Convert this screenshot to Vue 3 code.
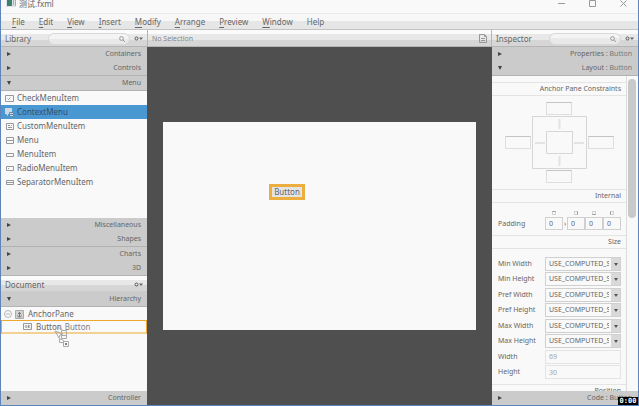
<script setup>
import { ref } from 'vue'

const menus = ['File', 'Edit', 'View', 'Insert', 'Modify', 'Arrange', 'Preview', 'Window', 'Help']
const topSections = [
  { name: 'Containers', open: false, lined: false },
  { name: 'Controls', open: false, lined: true },
  { name: 'Menu', open: true, lined: true },
]
const bottomSections = [
  { name: 'Miscellaneous', lined: false },
  { name: 'Shapes', lined: true },
  { name: 'Charts', lined: false },
  { name: '3D', lined: true },
]
const items = [
  { name: 'CheckMenuItem', icon: 'check' },
  { name: 'ContextMenu', icon: 'context' },
  { name: 'CustomMenuItem', icon: 'custom' },
  { name: 'Menu', icon: 'menu' },
  { name: 'MenuItem', icon: 'item' },
  { name: 'RadioMenuItem', icon: 'radio' },
  { name: 'SeparatorMenuItem', icon: 'separator' },
]
const selected = ref('ContextMenu')
const sizes = ['Min Width', 'Min Height', 'Pref Width', 'Pref Height', 'Max Width', 'Max Height']
const fixed = [
  { name: 'Width', value: '69' },
  { name: 'Height', value: '30' },
]
const sides = ['top', 'right', 'bottom', 'left']
</script>

<template>
  <div class="window">
    <header class="titlebar">
      <svg class="app-icon" viewBox="0 0 10 8"><path d="M0 0h10v7H0z" fill="#dfe5e4" /><path d="M1 0h5v6H1z" fill="#3f7f74" /><path d="M7 0h1v5H7zM9 0h1v6H9z" fill="#a9b0b0" /></svg>
      <span class="title">测试.fxml</span>
      <div class="window-buttons">
        <button aria-label="Minimize"><svg viewBox="0 0 7 7"><path d="M0 3.5h7" /></svg></button>
        <button aria-label="Maximize"><svg viewBox="0 0 7 7"><path d="M.5.5h6v6h-6z" /></svg></button>
        <button aria-label="Close"><svg viewBox="0 0 7 7"><path d="M.5.5l6 6M6.500.5l-6 6" /></svg></button>
      </div>
    </header>

    <nav class="menubar">
      <button v-for="m in menus" :key="m"><span :class="{ mnemonic: m !== 'Help' }">{{ m[0] }}</span>{{ m.slice(1) }}</button>
    </nav>

    <main class="workspace">
      <aside class="side left">
        <section class="library">
          <div class="panel-head">
            <h2>Library</h2>
            <div class="search">
              <input type="text" aria-label="Search library" />
              <svg viewBox="0 0 6 6"><circle cx="2.500" cy="2.500" r="1.900" /><path d="M4 4l2 2" /></svg>
            </div>
            <button class="gear" aria-label="Library options"><svg viewBox="0 0 9 5"><circle cx="2.500" cy="2.500" r="1.500" /><path class="fill" d="M5 1.500h4L7 4z" /></svg></button>
          </div>
          <button v-for="s in topSections" :key="s.name" class="section" :class="{ open: s.open, lined: s.lined }"><i class="arrow"></i><span>{{ s.name }}</span></button>
          <ul class="items">
            <li v-for="it in items" :key="it.name" :class="{ selected: it.name === selected }" @click="selected = it.name">
              <svg class="item-icon" viewBox="0 0 9 9">
                <template v-if="it.icon === 'check'"><path d="M.5 1.500h8v6h-8z" /><path d="M2.500 4.500l1 1 2-2" /></template>
                <template v-else-if="it.icon === 'context'"><path class="pale" d="M0 0h7v6H3v2L1 6H0z" /><path class="pale edge" d="M4.500 4.500h4v4h-4zM4.500 6.500h4" /></template>
                <template v-else-if="it.icon === 'custom'"><path d="M1.500 1.500h7v6h-7zM3 3.500h2M3 5.500h4M6 3.500h1" /></template>
                <template v-else-if="it.icon === 'menu'"><path d="M1.500 1.500h7v6h-7zM1.500 4.500h7" /></template>
                <template v-else-if="it.icon === 'item'"><path d="M1.500 3.500h7v3h-7z" /></template>
                <template v-else-if="it.icon === 'radio'"><path d="M1.500 2.500h7v4h-7zM3 4.500h1" /></template>
                <template v-else><path d="M1.500 2.500h7v4h-7zM1.500 4.500h7" /></template>
              </svg>
              <span>{{ it.name }}</span>
            </li>
          </ul>
          <button v-for="s in bottomSections" :key="s.name" class="section" :class="{ lined: s.lined }"><i class="arrow"></i><span>{{ s.name }}</span></button>
        </section>

        <section class="document">
          <div class="panel-head">
            <h2>Document</h2>
            <button class="gear" aria-label="Document options"><svg viewBox="0 0 9 5"><circle cx="2.500" cy="2.500" r="1.500" /><path class="fill" d="M5 1.500h4L7 4z" /></svg></button>
          </div>
          <button class="section open lined"><i class="arrow"></i><span>Hierarchy</span></button>
          <div class="tree">
            <div class="node root">
              <svg class="fold" viewBox="0 0 8 8"><circle cx="4" cy="4" r="3.500" /><path d="M2 4h4" /></svg>
              <svg class="anchor" viewBox="0 0 9 9"><path class="tile" d="M.5.5h8v8h-8z" /><path d="M4.500 2v5M3 3.500h3M2.500 5.500c0 2 4 2 4 0" /></svg>
              <span>AnchorPane</span>
            </div>
            <div class="node child">
              <svg class="ok" viewBox="0 0 9 7"><path d="M.5.5h8v6h-8z" /><circle cx="3.200" cy="3.500" r="1" /><path d="M5.500 2v3M7.300 2L5.700 3.500 7.300 5" /></svg>
              <span>Button</span><span class="info">Button</span>
              <svg class="drag" viewBox="0 0 18 22">
                <path d="M1.500 3.500a5 4 0 0 1 8 0M2 5l4 7 1-3 3-1z" />
                <path d="M8.500 4.500h5v8h-5zM9 9.500h4M6.500 12.500l4 2v2h-4z" />
                <path class="box" d="M10.500 15.500h5v5h-5z" /><path class="plus" d="M12 18h2M13 17v2" />
              </svg>
            </div>
          </div>
          <button class="section"><i class="arrow"></i><span>Controller</span></button>
        </section>
      </aside>

      <section class="editor">
        <div class="selection-bar">
          <span>No Selection</span>
          <svg viewBox="0 0 8 9"><path d="M.5.5h5l2 2v6h-7zM5.500.5v2h2M2 4.500h4M2 6.500h4" /></svg>
        </div>
        <div class="canvas">
          <div class="pane"><button class="placed">Button</button></div>
        </div>
      </section>

      <aside class="side inspector">
        <div class="panel-head">
          <h2>Inspector</h2>
          <div class="search">
            <input type="text" aria-label="Search inspector" />
            <svg viewBox="0 0 6 6"><circle cx="2.500" cy="2.500" r="1.900" /><path d="M4 4l2 2" /></svg>
          </div>
          <button class="gear" aria-label="Inspector options"><svg viewBox="0 0 9 5"><circle cx="2.500" cy="2.500" r="1.500" /><path class="fill" d="M5 1.500h4L7 4z" /></svg></button>
        </div>
        <button class="section"><i class="arrow"></i><span>Properties <em>: Button</em></span></button>
        <button class="section open lined"><i class="arrow"></i><span>Layout <em>: Button</em></span></button>
        <div class="scroll">
          <div class="props">
            <h3 class="first">Anchor Pane Constraints</h3>
            <div class="constraints">
              <input class="c-top" aria-label="Top anchor" />
              <input class="c-left" aria-label="Left anchor" />
              <svg class="c-box" viewBox="0 0 55 53">
                <path d="M.5.5h54v52H.5z" /><path d="M14.500 15.500h26v22h-26z" />
                <path class="thick" d="M27.500 3v10M27.500 40v10M3 27h10M42 27h10" />
              </svg>
              <input class="c-right" aria-label="Right anchor" />
              <input class="c-bottom" aria-label="Bottom anchor" />
            </div>
            <h3>Internal</h3>
            <div class="padding">
              <span class="label">Padding</span>
              <template v-for="(s, i) in sides" :key="s">
                <label class="side-field"><i :class="s"></i><input value="0" :aria-label="'Padding ' + s" /></label>
                <span v-if="i === 0" class="chevron">›</span>
              </template>
            </div>
            <h3>Size</h3>
            <div class="fields">
              <div v-for="s in sizes" :key="s" class="field">
                <label :for="s">{{ s }}</label>
                <div class="combo"><select :id="s"><option>USE_COMPUTED_SIZE</option></select></div>
              </div>
              <div v-for="f in fixed" :key="f.name" class="field">
                <label :for="f.name">{{ f.name }}</label>
                <input :id="f.name" :value="f.value" disabled />
              </div>
            </div>
            <h3 class="position">Position</h3>
          </div>
          <div class="track"><div class="thumb"></div></div>
        </div>
        <button class="section"><i class="arrow"></i><span>Code : Button</span></button>
      </aside>
    </main>
    <div class="timer">0:00</div>
  </div>
</template>

<style>
body {
  overflow: hidden;
}
</style>

<style scoped>
* {
  box-sizing: border-box;
}
.window {
  position: relative;
  display: flex;
  flex-direction: column;
  height: 100vh;
  border: 1px solid #5c86bb;
  border-top: 0;
  background: #f9f9f9;
  color: #666;
  font-family: "Noto Sans", "Noto Sans CJK SC", sans-serif;
  font-size: 8px;
  line-height: 12px;
}
button,
input,
select {
  margin: 0;
  padding: 0;
  border: 0;
  border-radius: 0;
  background: none;
  color: inherit;
  font: inherit;
}
svg {
  flex: none;
  fill: none;
  stroke: #999;
}
h2,
h3,
ul {
  margin: 0;
  padding: 0;
  font-size: inherit;
  font-weight: normal;
  list-style: none;
}
.titlebar {
  display: flex;
  flex: none;
  height: 14px;
  padding: 0 11px 0 5px;
  border-bottom: 1px solid #ebebeb;
}
.app-icon {
  width: 10px;
  height: 8px;
  stroke: none;
}
.title {
  margin-left: 3px;
  line-height: 8px;
}
.window-buttons {
  display: flex;
  gap: 24px;
  margin-left: auto;
}
.window-buttons button {
  display: flex;
  width: 7px;
  height: 7px;
}
.window-buttons svg {
  width: 7px;
  height: 7px;
}
.menubar {
  display: flex;
  flex: none;
  gap: 14px;
  height: 16px;
  padding: 0 11px;
  border-bottom: 1px solid #c2c2c2;
  background: linear-gradient(#f7f7f7 45%, #e6e6e6 45%);
}
.mnemonic {
  text-decoration: underline;
  text-underline-offset: 2px;
}
.workspace {
  display: grid;
  flex: 1;
  grid-template-columns: 146px 1fr 146px;
  min-height: 0;
}
.side {
  display: flex;
  flex-direction: column;
  min-width: 0;
  min-height: 0;
}
.library,
.document {
  display: flex;
  flex-direction: column;
  min-height: 0;
}
.library {
  flex: 246 1 0;
}
.document {
  flex: 129 1 0;
}
.panel-head,
.selection-bar {
  display: flex;
  flex: none;
  align-items: center;
  height: 17px;
  padding: 1px 4px 0;
  border-bottom: 1px solid #b5b5b5;
  background: linear-gradient(#fbfbfb 0 25%, #e8e8e8 25% 60%, #d6d6d6 60%);
}
.document .panel-head {
  height: 16px;
  padding-top: 2px;
  border-bottom-color: #cbcbcb;
}
.search {
  display: flex;
  flex: 1;
  align-items: center;
  height: 12px;
  margin-left: 17px;
  padding-right: 4px;
  border: 1px solid #d8d8d8;
  border-radius: 6px;
  background: linear-gradient(#f4f4f4 45%, #e9e9e9 45%);
}
.search input {
  flex: 1;
  width: 0;
}
.search svg {
  width: 6px;
  height: 6px;
}
.gear {
  display: flex;
  margin-left: 4px;
}
.document .gear {
  margin-left: auto;
}
.gear svg {
  width: 9px;
  height: 5px;
  stroke: #555;
}
.fill {
  fill: #666;
  stroke: none;
}
.section {
  display: flex;
  flex: none;
  align-items: center;
  justify-content: space-between;
  width: 100%;
  height: 14px;
  padding: 0 6px;
  background: #cbcbcb;
  font-size: 7px;
}
.section.lined {
  height: 15px;
  border-bottom: 1px solid #b2b2b2;
}
.section em {
  color: #777;
  font-style: normal;
}
.arrow {
  border: 2px solid transparent;
  border-right: 0;
  border-left: 4px solid #444;
}
.open .arrow {
  border: 2px solid transparent;
  border-top: 4px solid #444;
  border-bottom: 0;
}
.items {
  flex: 1;
  min-height: 0;
  overflow: hidden;
}
.items li {
  display: flex;
  align-items: center;
  gap: 3px;
  height: 14px;
  padding-left: 4px;
}
.items .selected {
  background: #4998d2;
  color: #344e68;
}
.item-icon {
  width: 9px;
  height: 9px;
}
.pale {
  fill: #ccd9e2;
  stroke: none;
}
.pale.edge {
  stroke: #658ba8;
}
.tree {
  flex: 1;
  min-height: 0;
}
.node {
  position: relative;
  display: flex;
  align-items: center;
  height: 14px;
}
.root {
  height: 13px;
  padding: 1px 0 0 3px;
}
.child {
  padding-left: 21px;
  border: 1px solid #eda72c;
  border-bottom: 2px solid #f3d193;
}
.info {
  margin-left: 3px;
  color: #828282;
}
.fold {
  width: 8px;
  height: 8px;
  margin-right: 3px;
  stroke: #b5b5b5;
}
.anchor {
  width: 9px;
  height: 9px;
  margin-right: 4px;
  stroke: #777;
}
.tile {
  fill: #d3d3d3;
  stroke: #aaa;
}
.ok {
  width: 9px;
  height: 7px;
  margin-right: 4px;
}
.drag {
  position: absolute;
  top: 5px;
  left: 51px;
  width: 18px;
  height: 22px;
  stroke: #aaa;
}
.box {
  fill: #fafafa;
}
.plus {
  stroke: #555;
}
.editor {
  display: flex;
  flex-direction: column;
  min-width: 0;
}
.selection-bar {
  justify-content: space-between;
  border: solid #b5b5b5;
  border-width: 0 1px 1px;
  color: #858585;
  font-size: 7px;
}
.selection-bar svg {
  width: 8px;
  height: 9px;
}
.canvas {
  display: flex;
  flex: 1;
  align-items: center;
  justify-content: center;
  background: #4f4f4f;
}
.pane {
  position: relative;
  width: calc(100% - 32px);
  aspect-ratio: 3 / 2;
  background: #f9f9f9;
}
.placed {
  position: absolute;
  top: 62px;
  left: 106px;
  width: 36px;
  height: 16px;
  border: 3px solid #edae40;
  background: #e4e4e4;
  line-height: 10px;
}
.scroll {
  display: flex;
  flex: 1;
  min-height: 0;
  overflow: hidden;
}
.props {
  flex: 1;
  min-width: 0;
  border-right: 1px solid #dcdcdc;
  font-size: 7px;
}
h3 {
  height: 14px;
  padding-right: 5px;
  border: solid #e4e4e4;
  border-width: 1px 0;
  text-align: right;
}
.first {
  margin-top: 6px;
}
.constraints {
  display: grid;
  grid-template-areas: ". top ." "left box right" ". bottom .";
  grid-template-columns: 26px 55px 26px;
  grid-template-rows: 13px 53px 13px;
  gap: 1px;
  place-content: center;
  place-items: center;
  height: 93px;
}
.constraints input {
  width: 26px;
  height: 13px;
  border: 1px solid #dedede;
  border-top-color: #c4c4c4;
}
.c-top {
  grid-area: top;
}
.c-left {
  grid-area: left;
}
.c-box {
  grid-area: box;
  width: 55px;
  height: 53px;
  stroke: #d6d6d6;
}
.c-right {
  grid-area: right;
}
.c-bottom {
  grid-area: bottom;
}
.thick {
  stroke: #e3e3e3;
  stroke-width: 2;
}
.padding {
  display: flex;
  align-items: flex-end;
  height: 32px;
  padding: 0 5px 5px 6px;
}
.padding .label {
  flex: 1;
}
.side-field {
  display: flex;
  flex-direction: column;
  gap: 2px;
  align-items: center;
}
.side-field i {
  width: 4px;
  height: 4px;
  border: 1px solid #d2d2d2;
}
.side-field .top {
  border-top-color: #999;
}
.side-field .right {
  border-right-color: #999;
}
.side-field .bottom {
  border-bottom-color: #999;
}
.side-field .left {
  border-left-color: #999;
}
.side-field input {
  width: 18px;
  height: 13px;
  padding-left: 3px;
  border: 1px solid #d0d0d0;
}
.chevron {
  width: 4px;
  text-align: center;
}
.fields {
  display: grid;
  grid-template-rows: repeat(8, 1fr);
  height: 135px;
  padding: 7px 5px 4px 6px;
}
.field {
  display: grid;
  grid-template-columns: 1fr 76px;
  align-items: center;
  min-height: 0;
}
.field input,
.combo {
  width: 100%;
  height: 14px;
  border: 1px solid #d0d0d0;
}
.field input {
  padding-left: 3px;
  border-color: #e4e4e4;
  color: #a5a5a5;
}
.combo {
  position: relative;
  display: flex;
  background: linear-gradient(to left, #d9d9d9 9px, transparent 9px);
}
.combo select {
  width: 100%;
  padding: 0 11px 0 3px;
  appearance: none;
}
.combo::after {
  position: absolute;
  top: 5px;
  right: 2px;
  border: 2px solid transparent;
  border-top: 3px solid #555;
  border-bottom: 0;
  content: "";
  pointer-events: none;
}
.track {
  flex: none;
  width: 11px;
  padding: 3px 1px;
}
.thumb {
  width: 8px;
  height: 139px;
  border-radius: 4px;
  background: #c9c9c9;
}
.timer {
  position: absolute;
  right: 0;
  bottom: 0;
  width: 20px;
  height: 8px;
  background: #000;
  color: #fff;
  font: bold 7px/8px "DejaVu Sans Mono", monospace;
  text-align: center;
}
</style>
